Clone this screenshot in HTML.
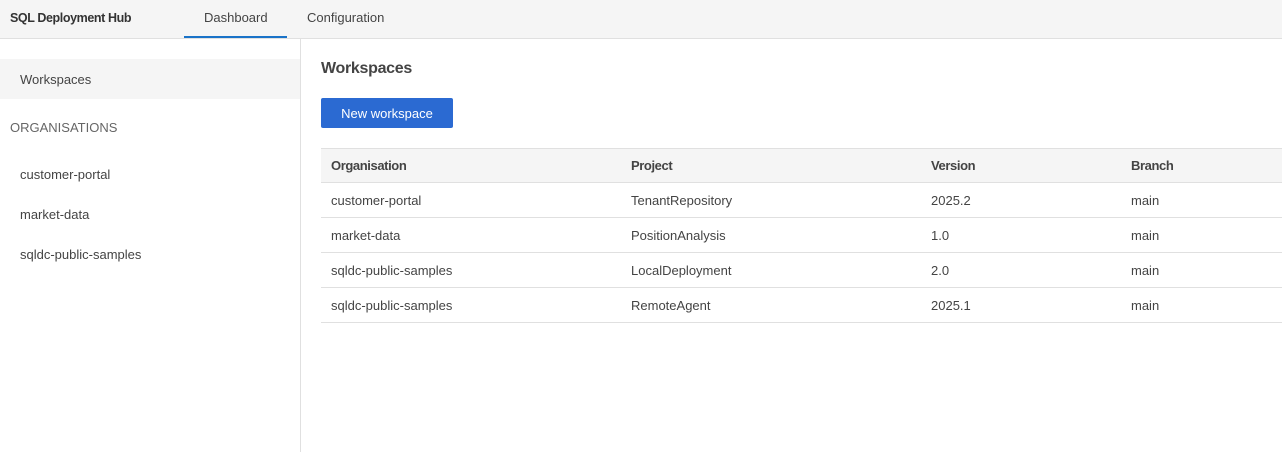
<!DOCTYPE html>
<html><head><style>
*{margin:0;padding:0;box-sizing:border-box}
body{width:1282px;height:452px;overflow:hidden;background:#fff;font-family:"Liberation Sans",Arial,sans-serif;font-size:13px;color:#333;position:relative}
.top{position:absolute;left:0;top:0;width:1282px;height:39px;background:#f5f5f5;border-bottom:1px solid #e0e0e0}
.brand{position:absolute;left:10px;top:11px;font-weight:bold;font-size:12.5px;letter-spacing:-0.4px;color:#333}
.tab{position:absolute;top:10px;font-size:13px;color:#444}
.ul{position:absolute;left:184px;top:36px;width:103px;height:2px;background:#1a73c8}
.side{position:absolute;left:0;top:39px;width:301px;height:413px;border-right:1px solid #e0e0e0}
.sel{position:absolute;left:0;top:20px;width:300px;height:40px;background:#f5f5f5}
.s{position:absolute;left:20px;font-size:13px;color:#444}
h1{position:absolute;left:321px;top:60px;font-size:16px;font-weight:bold;letter-spacing:-0.3px;color:#444}
.btn{position:absolute;left:321px;top:98px;width:132px;height:30px;background:#2b6ad2;color:#fff;border-radius:2px;font-size:13px;text-align:center;line-height:31px}
table{position:absolute;left:321px;top:148px;width:961px;border-collapse:collapse}
th,td{height:35px;text-align:left;padding-left:10px;font-size:13px;color:#444;border-bottom:1px solid #e0e0e0}
th{background:#f5f5f5;font-weight:bold;letter-spacing:-0.4px;border-top:1px solid #e0e0e0;height:34px}
</style></head><body>
<div class="top"><div class="brand">SQL Deployment Hub</div>
<div class="tab" style="left:204px">Dashboard</div><div class="tab" style="left:307px">Configuration</div><div class="ul"></div></div>
<div class="side"><div class="sel"></div>
<div class="s" style="top:33px">Workspaces</div>
<div class="s" style="left:10px;top:81px;color:#666">ORGANISATIONS</div>
<div class="s" style="top:128px">customer-portal</div>
<div class="s" style="top:168px">market-data</div>
<div class="s" style="top:208px">sqldc-public-samples</div></div>
<h1>Workspaces</h1>
<div class="btn">New workspace</div>
<table>
<tr><th style="width:300px">Organisation</th><th style="width:300px">Project</th><th style="width:200px">Version</th><th>Branch</th></tr>
<tr><td>customer-portal</td><td>TenantRepository</td><td>2025.2</td><td>main</td></tr>
<tr><td>market-data</td><td>PositionAnalysis</td><td>1.0</td><td>main</td></tr>
<tr><td>sqldc-public-samples</td><td>LocalDeployment</td><td>2.0</td><td>main</td></tr>
<tr><td>sqldc-public-samples</td><td>RemoteAgent</td><td>2025.1</td><td>main</td></tr>
</table>
</body></html>
